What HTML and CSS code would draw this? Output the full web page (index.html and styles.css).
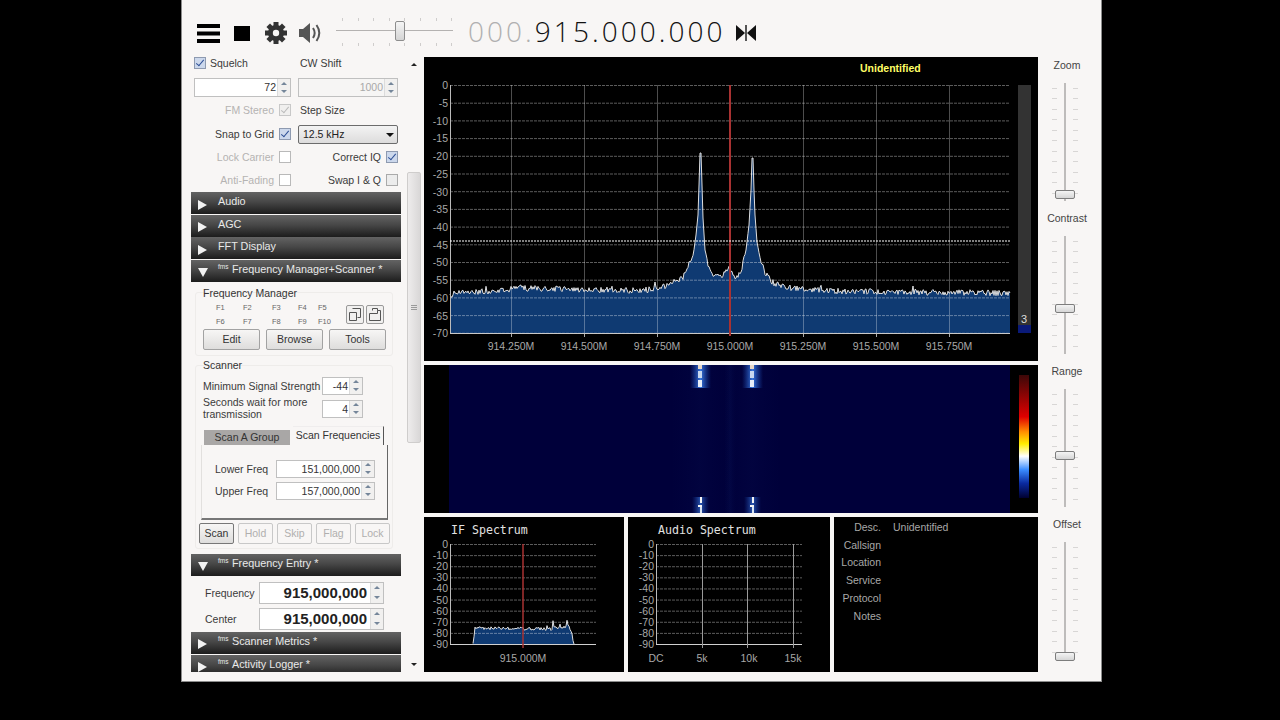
FILE: index.html
```html
<!DOCTYPE html>
<html>
    <head>
        <meta charset="UTF-8">
        <title>SDR Sharp</title>
        <link rel="stylesheet" href="styles.css">
    </head>

    <body>
        <div class="window">
            <!-- top bar -->
            <div class="toolbar">
                <svg class="icon-menu" width="23" height="19" viewBox="0 0 23 19">
                    <rect x="0" y="0" width="23" height="4"></rect>
                    <rect x="0" y="7.5" width="23" height="4"></rect>
                    <rect x="0" y="15" width="23" height="4"></rect>
                </svg>
                <div class="icon-stop"></div>
                <svg class="icon-gear" width="22" height="22" viewBox="-11 -11 22 22">
                    <g fill="#333">
                        <circle r="8"></circle>
                        <rect x="-2.5" y="-11" width="5" height="22"></rect>
                        <rect x="-2.5" y="-11" width="5" height="22" transform="rotate(45)"></rect>
                        <rect x="-2.5" y="-11" width="5" height="22" transform="rotate(90)"></rect>
                        <rect x="-2.5" y="-11" width="5" height="22" transform="rotate(135)"></rect>
                    </g>
                    <circle r="3.2" fill="#f8f6f5"></circle>
                </svg>
                <svg class="icon-speaker" width="23" height="22" viewBox="0 0 23 22">
                    <path d="M0 7h4l7-6v20l-7-6H0z" fill="#555"></path>
                    <path d="M14 6c2 3 2 7 0 10M17.5 3c3.500 5 3.500 11 0 16" fill="none" stroke="#555" stroke-width="2"></path>
                </svg>
                <div class="volume">
                    <div class="volume-ticks"></div>
                    <div class="volume-track"></div>
                    <div class="volume-thumb"></div>
                    <div class="volume-ticks lower"></div>
                </div>
                <div class="frequency"><span class="frequency-off">000.</span>915.000.000</div>
                <svg class="icon-center" width="20" height="16" viewBox="0 0 20 16">
                    <path d="M0 0l9 8-9 8zM20 0l-9 8 9 8z" fill="#111"></path>
                    <rect x="9" y="0" width="2" height="16" fill="#555"></rect>
                </svg>
            </div>

            <div class="main">
                <!-- left control panel -->
                <div class="left-part">
                    <div class="controls">
                        <div class="row row-first">
                            <div class="cell cell-start"><span class="check on"></span><span class="text-gap">Squelch</span></div>
                            <div class="cell cell-start"><span class="text-pad">CW Shift</span></div>
                        </div>
                        <div class="row row-input">
                            <div class="spin"><div class="spin-value">72</div><div class="spin-buttons"><i></i><i></i></div></div>
                            <div class="spin spin-off"><div class="spin-value">1000</div><div class="spin-buttons"><i></i><i></i></div></div>
                        </div>
                        <div class="row row-check">
                            <div class="cell off">FM Stereo<span class="check on disabled"></span></div>
                            <div class="cell cell-start"><span class="text-pad">Step Size</span></div>
                        </div>
                        <div class="row row-input">
                            <div class="cell cell-up">Snap to Grid<span class="check on"></span></div>
                            <div class="select">12.5 kHz</div>
                        </div>
                        <div class="row row-check">
                            <div class="cell off">Lock Carrier<span class="check"></span></div>
                            <div class="cell">Correct IQ<span class="check on"></span></div>
                        </div>
                        <div class="row row-last">
                            <div class="cell off">Anti-Fading<span class="check"></span></div>
                            <div class="cell">Swap I &amp; Q<span class="check grey"></span></div>
                        </div>

                        <div class="section-head"><span class="arrow-right"></span>Audio</div>
                        <div class="section-head"><span class="arrow-right"></span>AGC</div>
                        <div class="section-head"><span class="arrow-right"></span>FFT Display</div>
                        <div class="section-head"><span class="arrow-down"></span><span class="fms">fms</span>Frequency Manager+Scanner *</div>

                        <div class="group group-manager">
                            <div class="group-title">Frequency Manager</div>
                            <div class="fkey-row">
                                <div class="fkeys">
                                    <span>F1</span><span>F2</span><span>F3</span><span>F4</span><span>F5</span>
                                    <span>F6</span><span>F7</span><span>F8</span><span>F9</span><span>F10</span>
                                </div>
                                <div class="copy-button">
                                    <svg width="14" height="15" viewBox="0 0 14 15"><path d="M4.500 1.500h8v9h-3M1.500 5.500h7v8h-7z" fill="none" stroke="#555"></path></svg>
                                </div>
                                <div class="copy-button">
                                    <svg width="14" height="15" viewBox="0 0 14 15"><path d="M4.500 3.500v-2h5v2M9.500 3.500h3v10h-11v-7h8z" fill="none" stroke="#555"></path></svg>
                                </div>
                            </div>
                            <div class="button-row">
                                <div class="button wide">Edit</div>
                                <div class="button wide">Browse</div>
                                <div class="button wide">Tools</div>
                            </div>
                        </div>

                        <div class="group group-scanner">
                            <div class="group-title">Scanner</div>
                            <div class="scan-row first">
                                <div class="scan-label">Minimum Signal Strength</div>
                                <div class="spin spin-small"><div class="spin-value">-44</div><div class="spin-buttons"><i></i><i></i></div></div>
                            </div>
                            <div class="scan-row">
                                <div class="scan-label two-lines">Seconds wait for more transmission</div>
                                <div class="spin spin-small"><div class="spin-value">4</div><div class="spin-buttons"><i></i><i></i></div></div>
                            </div>
                            <div class="tabs">
                                <div class="tab">Scan A Group</div>
                                <div class="tab tab-on">Scan Frequencies</div>
                            </div>
                            <div class="tab-page">
                                <div class="freq-row">
                                    <div class="freq-label">Lower Freq</div>
                                    <div class="spin spin-freq"><div class="spin-value">151,000,000</div><div class="spin-buttons"><i></i><i></i></div></div>
                                </div>
                                <div class="freq-row">
                                    <div class="freq-label">Upper Freq</div>
                                    <div class="spin spin-freq"><div class="spin-value">157,000,000</div><div class="spin-buttons"><i></i><i></i></div></div>
                                </div>
                            </div>
                            <div class="scan-buttons">
                                <div class="button small on">Scan</div>
                                <div class="button small off">Hold</div>
                                <div class="button small off">Skip</div>
                                <div class="button small off">Flag</div>
                                <div class="button small off">Lock</div>
                            </div>
                        </div>

                        <div class="section-head head-entry"><span class="arrow-down"></span><span class="fms">fms</span>Frequency Entry *</div>
                        <div class="entry-row">
                            <div class="entry-label">Frequency</div>
                            <div class="spin spin-entry"><div class="spin-value">915,000,000</div><div class="spin-buttons"><i></i><i></i></div></div>
                        </div>
                        <div class="entry-row">
                            <div class="entry-label">Center</div>
                            <div class="spin spin-entry"><div class="spin-value">915,000,000</div><div class="spin-buttons"><i></i><i></i></div></div>
                        </div>
                        <div class="section-head head-metrics"><span class="arrow-right"></span><span class="fms">fms</span>Scanner Metrics *</div>
                        <div class="section-head"><span class="arrow-right"></span><span class="fms">fms</span>Activity Logger *</div>
                    </div>

                    <div class="scrollbar">
                        <div class="scroll-up"></div>
                        <div class="scroll-thumb"><i></i><i></i><i></i></div>
                        <div class="scroll-down"></div>
                    </div>
                </div>

                <!-- charts -->
                <div class="center">
                    <svg id="main-chart" class="chart" width="614" height="304" viewBox="424 57 614 304">
                        <text class="title-yellow" x="860" y="72">Unidentified</text>
                        <g class="axis-text end">
                            <text x="448" y="89">0</text>
                            <text x="448" y="107">-5</text>
                            <text x="448" y="125">-10</text>
                            <text x="448" y="142">-15</text>
                            <text x="448" y="160">-20</text>
                            <text x="448" y="178">-25</text>
                            <text x="448" y="196">-30</text>
                            <text x="448" y="213">-35</text>
                            <text x="448" y="231">-40</text>
                            <text x="448" y="249">-45</text>
                            <text x="448" y="266">-50</text>
                            <text x="448" y="284">-55</text>
                            <text x="448" y="302">-60</text>
                            <text x="448" y="320">-65</text>
                            <text x="448" y="337">-70</text>
                        </g>
                        <g class="axis-text middle">
                            <text x="511" y="350">914.250M</text>
                            <text x="584" y="350">914.500M</text>
                            <text x="657" y="350">914.750M</text>
                            <text x="730" y="350">915.000M</text>
                            <text x="803" y="350">915.250M</text>
                            <text x="876" y="350">915.500M</text>
                            <text x="949" y="350">915.750M</text>
                        </g>
                        <text class="gain-text" x="1024" y="323">3</text>
                    </svg>

                    <svg id="waterfall" class="chart" width="614" height="148" viewBox="424 365 614 148">
                        <defs>
                            <linearGradient id="color-scale" x1="0" y1="0" x2="0" y2="1">
                                <stop offset="0" stop-color="#3c0808"></stop>
                                <stop offset="0.34" stop-color="#e00000"></stop>
                                <stop offset="0.46" stop-color="#ff8c00"></stop>
                                <stop offset="0.56" stop-color="#ffee00"></stop>
                                <stop offset="0.66" stop-color="#ffffff"></stop>
                                <stop offset="0.77" stop-color="#3a8cff"></stop>
                                <stop offset="0.88" stop-color="#0a2aa0"></stop>
                                <stop offset="1" stop-color="#000030"></stop>
                            </linearGradient>
                            <linearGradient id="glow" x1="0" y1="0" x2="1" y2="0">
                                <stop offset="0" stop-color="#1a4ab0" stop-opacity="0"></stop>
                                <stop offset="0.5" stop-color="#3a78e0"></stop>
                                <stop offset="1" stop-color="#1a4ab0" stop-opacity="0"></stop>
                            </linearGradient>
                        </defs>
                        <rect x="1019" y="375" width="10" height="123" fill="url(#color-scale)"></rect>
                    </svg>

                    <div class="bottom-row">
                        <svg id="if-chart" class="chart" width="200" height="155" viewBox="424 517 200 155">
                            <text class="mono-title" x="451" y="534">IF Spectrum</text>
                            <g class="axis-text end">
                                <text x="448" y="548">0</text><text x="448" y="559">-10</text>
                                <text x="448" y="570">-20</text><text x="448" y="581">-30</text>
                                <text x="448" y="592">-40</text><text x="448" y="604">-50</text>
                                <text x="448" y="615">-60</text><text x="448" y="626">-70</text>
                                <text x="448" y="637">-80</text><text x="448" y="648">-90</text>
                            </g>
                            <text class="axis-text middle" x="523" y="662">915.000M</text>
                        </svg>
                        <svg id="audio-chart" class="chart" width="202" height="155" viewBox="628 517 202 155">
                            <text class="mono-title" x="658" y="534">Audio Spectrum</text>
                            <g class="axis-text end">
                                <text x="654" y="548">0</text><text x="654" y="559">-10</text>
                                <text x="654" y="570">-20</text><text x="654" y="581">-30</text>
                                <text x="654" y="592">-40</text><text x="654" y="604">-50</text>
                                <text x="654" y="615">-60</text><text x="654" y="626">-70</text>
                                <text x="654" y="637">-80</text><text x="654" y="648">-90</text>
                            </g>
                            <g class="axis-text middle">
                                <text x="656" y="662">DC</text>
                                <text x="702" y="662">5k</text>
                                <text x="749" y="662">10k</text>
                                <text x="793" y="662">15k</text>
                            </g>
                        </svg>
                        <div class="info">
                            <div class="info-label">Desc.</div><div>Unidentified</div>
                            <div class="info-label">Callsign</div><div></div>
                            <div class="info-label">Location</div><div></div>
                            <div class="info-label">Service</div><div></div>
                            <div class="info-label">Protocol</div><div></div>
                            <div class="info-label">Notes</div><div></div>
                        </div>
                    </div>
                </div>

                <!-- right faders -->
                <div class="right-part">
                    <div class="fader-box">
                        <div class="fader-label">Zoom</div>
                        <div class="fader"><div class="fader-thumb" style="top: 107px"></div></div>
                    </div>
                    <div class="fader-box">
                        <div class="fader-label">Contrast</div>
                        <div class="fader"><div class="fader-thumb" style="top: 68px"></div></div>
                    </div>
                    <div class="fader-box">
                        <div class="fader-label">Range</div>
                        <div class="fader"><div class="fader-thumb" style="top: 62px"></div></div>
                    </div>
                    <div class="fader-box">
                        <div class="fader-label">Offset</div>
                        <div class="fader"><div class="fader-thumb" style="top: 110px"></div></div>
                    </div>
                </div>
            </div>
        </div>

        <script src="spectrum.js"></script>
    </body>
</html>
```

FILE: styles.css
```css
html{
    height: 100%;
}
body{
    margin: 0;
    height: 100%;
    background: #000;
    font-family: "Liberation Sans", Arial, sans-serif;
    font-size: 10.5px;
    color: #3a3a3a;
    overflow: hidden;
}
.window{
    box-sizing: border-box;
    width: 921px;
    height: 682px;
    margin-left: 181px;
    background: #f8f6f5;
    border-left: 1px solid #8c8c8c;
    border-right: 1px solid #8c8c8c;
    border-bottom: 1px solid #8c8c8c;
}

/* top bar */
.toolbar{
    box-sizing: border-box;
    display: flex;
    align-items: center;
    height: 57px;
    padding: 9px 0 0 15px;
}
.icon-stop{
    width: 16px;
    height: 15px;
    margin-left: 14px;
    background: #000;
}
.icon-gear{
    margin-left: 15px;
}
.icon-speaker{
    margin-left: 12px;
}
.volume{
    position: relative;
    width: 117px;
    height: 30px;
    margin-left: 14px;
}
.volume-ticks{
    height: 3px;
    background: repeating-linear-gradient(to right, #cfcdcc 0 1px, transparent 1px 15.6px) 6px 0 no-repeat;
}
.volume-ticks.lower{
    margin-top: 22px;
}
.volume-track{
    position: absolute;
    left: 0;
    right: 0;
    top: 12px;
    height: 1px;
    background: #b4b2b1;
}
.volume-thumb{
    position: absolute;
    left: 59px;
    top: 3px;
    box-sizing: border-box;
    width: 10px;
    height: 20px;
    border: 1px solid #8d8d8d;
    border-radius: 2px;
    background: linear-gradient(#f5f5f5, #d4d4d4);
}
.frequency{
    margin: -4px 0 0 15px;
    width: 268px;
    font-family: "Open Sans", "Liberation Sans", sans-serif;
    font-weight: 300;
    font-size: 28px;
    letter-spacing: 3.05px;
    color: #111;
    white-space: nowrap;
}
.frequency-off{
    color: #b0b0b0;
}

.main{
    display: flex;
    height: 615px;
}

/* left panel */
.left-part{
    display: flex;
    width: 242px;
    height: 615px;
}
.controls{
    width: 210px;
    margin-left: 9px;
    overflow: hidden;
}
.row{
    display: grid;
    grid-template-columns: 97px 100px;
    column-gap: 7px;
    margin-left: 3px;
    align-items: center;
}
.row-first{
    height: 12px;
}
.row-input{
    height: 19px;
    margin-top: 9px;
}
.row-check{
    height: 12px;
    margin-top: 7px;
}
.row-last{
    height: 12px;
    margin-top: 11px;
    margin-bottom: 6px;
}
.cell{
    display: flex;
    justify-content: flex-end;
    align-items: center;
    white-space: nowrap;
}
.cell-start{
    justify-content: flex-start;
}
.cell-up{
    margin-top: -2px;
}
.cell.off{
    color: #b5b3b2;
}
.text-gap{
    margin-left: 4px;
}
.text-pad{
    margin-left: 2px;
}
.check{
    position: relative;
    box-sizing: border-box;
    width: 12px;
    height: 12px;
    margin-left: 5px;
    border: 1px solid #b9b9b9;
    background: #fff;
}
.cell-start > .check{
    margin-left: 0;
}
.check.on{
    background: #ccd8ec;
    border-color: #8e9ab0;
}
.check.on::after{
    content: "";
    position: absolute;
    left: 3px;
    top: 0;
    width: 3px;
    height: 7px;
    border-right: 1.5px solid #2d4f96;
    border-bottom: 1.5px solid #2d4f96;
    transform: rotate(40deg);
}
.check.disabled{
    background: #f0efee;
    border-color: #c8c8c8;
}
.check.disabled::after{
    border-color: #bbb;
}
.check.grey{
    background: #ececec;
    border-color: #aaa;
}
.select{
    box-sizing: border-box;
    position: relative;
    height: 19px;
    line-height: 17px;
    padding-left: 4px;
    border: 1px solid #6c6c6c;
    border-radius: 2px;
    background: linear-gradient(#f3f3f3, #dddcdc);
    color: #222;
}
.select::after{
    content: "";
    position: absolute;
    right: 3px;
    top: 7px;
    border-left: 4px solid transparent;
    border-right: 4px solid transparent;
    border-top: 4px solid #111;
}

/* number box with up and down buttons */
.spin{
    box-sizing: border-box;
    display: flex;
    height: 19px;
    border: 1px solid #c0c0c0;
    background: #fff;
}
.spin-value{
    flex: 1;
    text-align: right;
    padding-right: 1px;
    line-height: 16px;
    color: #333;
}
.spin-buttons{
    display: flex;
    flex-direction: column;
    width: 12px;
    background: #f1f0ef;
    border-left: 1px solid #dcdcdc;
}
.spin-buttons i{
    flex: 1;
    display: flex;
    justify-content: center;
    align-items: center;
}
.spin-buttons i::before{
    content: "";
    border-left: 3px solid transparent;
    border-right: 3px solid transparent;
    border-bottom: 3px solid #75869a;
}
.spin-buttons i + i::before{
    border-bottom: none;
    border-top: 3px solid #75869a;
}
.spin-off{
    background: #f6f5f4;
}
.spin-off .spin-value{
    color: #a8a8a8;
}
.spin-small{
    width: 41px;
    height: 18px;
}
.spin-freq{
    width: 99px;
    height: 18px;
}
.spin-entry{
    width: 125px;
    height: 22px;
}
.spin-entry .spin-value{
    font-size: 15px;
    font-weight: bold;
    line-height: 20px;
    color: #222;
    padding-right: 3px;
}

/* dark section bars */
.section-head{
    box-sizing: border-box;
    display: flex;
    align-items: center;
    height: 22px;
    margin-bottom: 0.67px;
    padding: 0 0 4px 7px;
    background: linear-gradient(#636363, #474747 45%, #1c1c1c);
    color: #e9e9e9;
    font-size: 10.8px;
    white-space: nowrap;
}
.head-entry{
    margin-top: 5px;
}
.head-metrics{
    margin-top: 2px;
}
.arrow-right{
    width: 0;
    height: 0;
    margin: 7px 11px 0 0;
    border-top: 5px solid transparent;
    border-bottom: 5px solid transparent;
    border-left: 9px solid #f2f2f2;
}
.arrow-down{
    width: 0;
    height: 0;
    margin: 7px 10px 0 0;
    border-left: 5px solid transparent;
    border-right: 5px solid transparent;
    border-top: 9px solid #f2f2f2;
}
.fms{
    width: 14px;
    margin-bottom: 5px;
    font-size: 6.5px;
}

/* grouped boxes */
.group{
    box-sizing: border-box;
    width: 198px;
    margin-left: 4px;
    padding: 0 0 0 7px;
    border: 1px solid #eeecea;
    border-radius: 3px;
}
.group-title{
    height: 13px;
    line-height: 13px;
    margin-top: -7px;
    color: #333;
}
.group-manager{
    height: 64px;
    margin-top: 10px;
}
.group-manager .group-title{
    margin-top: -6px;
}
.group-scanner{
    height: 184px;
    margin-top: 9px;
}
.fkey-row{
    display: flex;
    align-items: flex-start;
    height: 19px;
    margin-top: 5px;
}
.fkeys{
    display: grid;
    grid-template-columns: 27px 29px 26px 20px 12px;
    grid-auto-rows: 14px;
    width: 130px;
    margin: -1px 0 0 13px;
    font-size: 7.5px;
    line-height: 8px;
    color: #666;
}
.copy-button{
    box-sizing: border-box;
    display: flex;
    justify-content: center;
    align-items: center;
    width: 18px;
    height: 19px;
    margin-right: 2px;
    border: 1px solid #999;
    border-radius: 2px;
    background: #f1f0ef;
}
.button-row{
    display: flex;
    gap: 6px;
    margin-top: 5px;
}
.button{
    box-sizing: border-box;
    text-align: center;
    border: 1px solid #a2a2a2;
    border-radius: 2px;
    background: linear-gradient(#f7f6f5, #dedddc);
    color: #333;
}
.button.wide{
    width: 57px;
    height: 21px;
    line-height: 18px;
}
.button.small{
    width: 35px;
    height: 21px;
    line-height: 19px;
}
.button.small.on{
    border-color: #777;
}
.button.small.off{
    background: #f8f6f5;
    border-color: #c8c8c8;
    color: #b0afae;
}

.scan-row{
    display: flex;
    height: 18px;
    margin-top: 5px;
    align-items: center;
}
.scan-label{
    width: 119px;
}
.scan-label.two-lines{
    align-self: flex-start;
    margin-top: -4px;
    line-height: 12px;
}
.tabs{
    display: flex;
    align-items: flex-end;
    height: 19px;
    margin: 8px 0 0 1px;
}
.tab{
    width: 86px;
    height: 15px;
    line-height: 15px;
    text-align: center;
    background: #a9a7a6;
    color: #333;
}
.tab-on{
    box-sizing: border-box;
    width: 91px;
    height: 19px;
    line-height: 17px;
    margin-left: 3px;
    background: #f8f6f5;
    border-right: 1px solid #555;
    border-top: 1px solid #efeded;
}
.tab-page{
    box-sizing: border-box;
    width: 187px;
    height: 75px;
    margin-left: -2px;
    padding: 15px 0 0 13px;
    border-left: 1px solid #e2e0de;
    border-right: 1px solid #666;
    border-bottom: 2px solid #777;
}
.freq-row{
    display: flex;
    align-items: center;
    margin-bottom: 4px;
}
.freq-label{
    width: 61px;
}
.scan-buttons{
    display: flex;
    gap: 4px;
    margin: 3px 0 0 -4px;
}
.entry-row{
    display: flex;
    align-items: center;
    height: 22px;
    margin-top: 4px;
    padding-left: 14px;
}
.head-entry + .entry-row{
    margin-top: 6px;
}
.entry-label{
    width: 54px;
}

/* scroll bar */
.scrollbar{
    display: flex;
    flex-direction: column;
    width: 15px;
    height: 615px;
    margin-left: 5px;
}
.scroll-up, .scroll-down{
    position: relative;
    height: 16px;
}
.scroll-up::before{
    content: "";
    position: absolute;
    left: 5px;
    top: 6px;
    border-left: 3px solid transparent;
    border-right: 3px solid transparent;
    border-bottom: 3px solid #222;
}
.scroll-down{
    margin-top: auto;
}
.scroll-down::before{
    content: "";
    position: absolute;
    left: 5px;
    top: 7px;
    border-left: 3px solid transparent;
    border-right: 3px solid transparent;
    border-top: 3px solid #222;
}
.scroll-thumb{
    box-sizing: border-box;
    display: flex;
    flex-direction: column;
    justify-content: center;
    align-items: center;
    gap: 1px;
    width: 14px;
    height: 271px;
    margin: 99px 0 0 1px;
    border: 1px solid #cfcdcc;
    border-radius: 2px;
    background: linear-gradient(to right, #eeecec, #d9d7d7);
}
.scroll-thumb i{
    width: 6px;
    height: 1px;
    background: #9a9a9a;
}

/* charts */
.center{
    display: flex;
    flex-direction: column;
    gap: 4px;
    width: 614px;
}
.chart{
    display: block;
    background: #000;
}
.bottom-row{
    display: flex;
    gap: 4px;
}
.axis-text{
    fill: #a8a8a8;
    font-size: 10.5px;
}
.end{
    text-anchor: end;
}
.middle{
    text-anchor: middle;
}
.title-yellow{
    fill: #ffff66;
    font-size: 10.5px;
    font-weight: bold;
}
.gain-text{
    fill: #ddd;
    font-size: 11px;
    text-anchor: middle;
}
.mono-title{
    fill: #e2e2e2;
    font-family: "DejaVu Sans Mono", monospace;
    font-size: 11.6px;
}
.info{
    display: grid;
    grid-template-columns: 47px 1fr;
    grid-auto-rows: 17.8px;
    column-gap: 12px;
    align-items: center;
    box-sizing: border-box;
    width: 204px;
    height: 155px;
    padding-top: 1px;
    background: #000;
    color: #a8a8a8;
}
.info-label{
    text-align: right;
}

/* faders on the right */
.right-part{
    width: 62px;
}
.fader-box{
    height: 153px;
}
.fader-label{
    height: 16px;
    line-height: 16px;
    padding-right: 4px;
    text-align: center;
    color: #444;
}
.fader{
    position: relative;
    width: 26px;
    height: 118px;
    margin: 10px 0 0 14px;
    background:
        repeating-linear-gradient(to bottom, #d8d6d5 0 1px, transparent 1px 10px, #d8d6d5 10px 11px, transparent 11px 21px) left 5px / 5px 100% no-repeat,
        repeating-linear-gradient(to bottom, #d8d6d5 0 1px, transparent 1px 10px, #d8d6d5 10px 11px, transparent 11px 21px) right 5px / 5px 100% no-repeat;
}
.fader::before{
    content: "";
    position: absolute;
    left: 12px;
    top: 0;
    bottom: 0;
    width: 2px;
    background: #bebcbb;
}
.fader-thumb{
    position: absolute;
    left: 3px;
    box-sizing: border-box;
    width: 20px;
    height: 9px;
    border: 1px solid #7d7d7d;
    border-radius: 2px;
    background: linear-gradient(#f4f4f4, #d6d6d6);
}
```

FILE: spectrum.js
```js
// draws the traces and grids, labels are already in the page
var NS = 'http://www.w3.org/2000/svg';
var seed = 4711;

function rnd(){
    seed = (seed * 16807) % 2147483647;
    return seed / 2147483647;
}

function add(svg, tag, attrs){
    var el = document.createElementNS(NS, tag);
    for(var k in attrs){
        el.setAttribute(k, attrs[k]);
    }
    svg.appendChild(el);
    return el;
}

function line(svg, x1, y1, x2, y2, color, dash, width){
    var attrs = {x1: x1, y1: y1, x2: x2, y2: y2, stroke: color, 'stroke-width': width || 1};
    if(dash){
        attrs['stroke-dasharray'] = dash;
    }
    return add(svg, 'line', attrs);
}

// straight pieces between the points, with some noise on top
function buildTrace(points, noise){
    var out = [];
    for(var i = 0; i < points.length - 1; i++){
        var a = points[i], b = points[i + 1];
        for(var x = a[0]; x < b[0]; x++){
            var y = a[1] + (b[1] - a[1]) * (x - a[0]) / (b[0] - a[0]);
            var n = y < 255 ? 0 : (rnd() - 0.5) * noise;
            if(y > 255 && rnd() > 0.985){
                n -= 4;
            }
            out.push([x, y + n]);
        }
    }
    out.push(points[points.length - 1]);
    return out;
}

function drawTrace(svg, trace, bottom){
    var d = trace.map(function(p){ return p[0] + ' ' + p[1].toFixed(1); }).join(' L');
    add(svg, 'path', {d: 'M' + trace[0][0] + ' ' + bottom + ' L' + d + ' L' + trace[trace.length - 1][0] + ' ' + bottom + ' Z', fill: '#0f3a72'});
    add(svg, 'path', {d: 'M' + d, fill: 'none', stroke: '#dedede', 'stroke-width': 1});
}

// main spectrum
var mainChart = document.getElementById('main-chart');
add(mainChart, 'rect', {x: 1018, y: 85, width: 13, height: 248, fill: '#333'});
add(mainChart, 'rect', {x: 1018, y: 325, width: 13, height: 8, fill: '#0a1a78'});
mainChart.appendChild(mainChart.querySelector('.gain-text'));
drawTrace(mainChart, buildTrace([
    [450, 297], [455, 292], [500, 291], [514, 288], [560, 289], [620, 290], [640, 291], [660, 288],
    [672, 283], [683, 277], [690, 262], [693, 257], [696, 235], [698, 215], [699, 185], [700, 153],
    [701, 153], [702, 185], [703, 218], [705, 250], [708, 265], [711, 273], [722, 275], [729, 269],
    [733, 275], [736, 280], [742, 268], [746, 250], [749, 225], [751, 190], [752, 158], [753, 158],
    [754, 190], [755, 215], [757, 242], [760, 258], [765, 272], [772, 282], [785, 287], [800, 289],
    [830, 291], [900, 292], [1010, 293]
], 6), 333);
for(var i = 0; i < 15; i++){
    var gy = 85.5 + i * 17.7;
    line(mainChart, 450, gy, 1010, gy, 'rgba(255,255,255,0.36)', '3 1');
}
[511, 584, 657, 803, 876, 949].forEach(function(x){
    line(mainChart, x + 0.5, 85, x + 0.5, 333, 'rgba(255,255,255,0.3)');
    line(mainChart, x + 0.5, 333, x + 0.5, 337, '#aaa');
});
line(mainChart, 450.5, 85, 450.5, 333, '#bbb');
line(mainChart, 450, 333.5, 1010, 333.5, '#c8c8c8');
line(mainChart, 730, 85, 730, 336, '#a83232', null, 2);
line(mainChart, 450, 241, 1010, 241, '#fff', '2 1');

// waterfall
var fall = document.getElementById('waterfall');
var scale = fall.querySelector('rect[fill="url(#color-scale)"]');
add(fall, 'rect', {x: 449, y: 365, width: 561, height: 148, fill: '#00003a'});
add(fall, 'rect', {x: 724, y: 365, width: 12, height: 148, fill: 'url(#glow)', opacity: 0.05});
[700, 752].forEach(function(x){
    add(fall, 'rect', {x: x - 30, y: 365, width: 60, height: 148, fill: 'url(#glow)', opacity: 0.03});
    add(fall, 'rect', {x: x - 10, y: 365, width: 21, height: 23, fill: 'url(#glow)'});
    add(fall, 'rect', {x: x - 8, y: 497, width: 17, height: 16, fill: 'url(#glow)', opacity: 0.7});
    add(fall, 'rect', {x: x - 2, y: 365, width: 4, height: 4, fill: '#e8d8c8'});
    add(fall, 'rect', {x: x - 2, y: 371, width: 4, height: 7, fill: '#c8d8f0'});
    add(fall, 'rect', {x: x - 2, y: 380, width: 4, height: 7, fill: '#e8eef8'});
    add(fall, 'rect', {x: x, y: 497, width: 2, height: 6, fill: '#f4f4f4'});
    add(fall, 'rect', {x: x - 2, y: 505, width: 4, height: 2, fill: '#f4f4f4'});
    add(fall, 'rect', {x: x, y: 507, width: 2, height: 6, fill: '#d8e4f4'});
});
fall.appendChild(scale);

// small charts
function smallGrid(svg, left, right){
    for(var i = 0; i < 9; i++){
        var y = 544.5 + i * 11.11;
        line(svg, left, y, right, y, 'rgba(255,255,255,0.36)', '3 1');
    }
    line(svg, left + 0.5, 544, left + 0.5, 644, '#bbb');
    line(svg, left, 644.5, right, 644.5, '#d0d0d0');
}

var ifChart = document.getElementById('if-chart');
drawTrace(ifChart, buildTrace([
    [473, 644], [475, 628], [552, 629], [553, 621], [554, 628], [566, 627], [567, 620], [568, 626],
    [571, 630], [573, 640], [574, 644]
], 3), 644);
smallGrid(ifChart, 450, 596);
line(ifChart, 523, 544, 523, 648, '#a83232', null, 1.5);

var audioChart = document.getElementById('audio-chart');
smallGrid(audioChart, 656, 802);
[702, 747, 793].forEach(function(x){
    line(audioChart, x + 0.5, 544, x + 0.5, 648, '#9a9a9a');
});
```
